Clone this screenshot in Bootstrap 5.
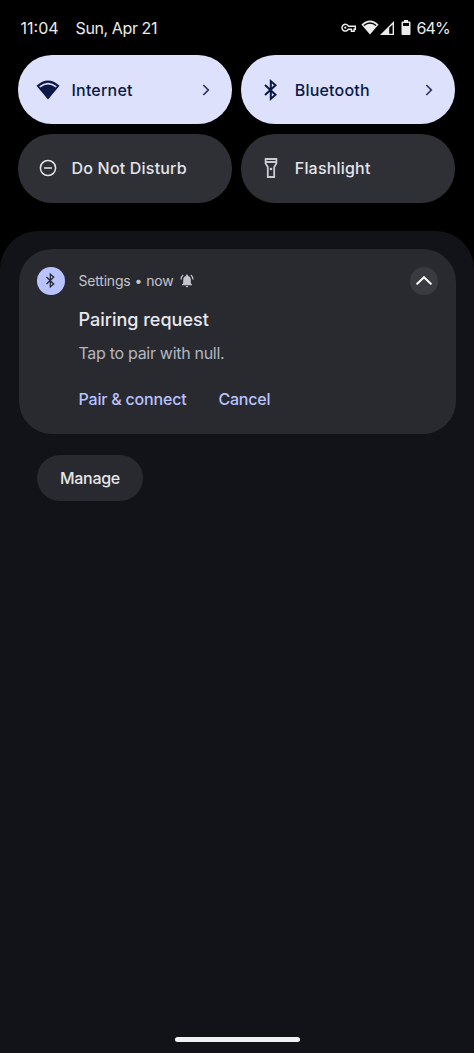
<!DOCTYPE html>
<html lang="en" data-bs-theme="dark">
<head>
    <meta charset="UTF-8">
    <meta name="viewport" content="width=device-width, initial-scale=1.0">
    <title>Notifications</title>
    <!-- Bootstrap 5 CSS -->
    <link href="https://cdn.jsdelivr.net/npm/bootstrap@5.3.2/dist/css/bootstrap.min.css" rel="stylesheet">
    <style>
        body {
            background-color: #000;
            color: #e4e4ea;
            font-family: Inter, Roboto, "Liberation Sans", sans-serif;
            font-size: 16px;
            line-height: 24px;
            min-height: 100vh;
            overflow: hidden;
        }
        svg {
            display: block;
            flex-shrink: 0;
        }
        .status-bar {
            height: 55px;
            padding: 0 24px 0 20.5px;
            color: #ececec;
        }
        .status-date {
            margin-left: 17px;
            letter-spacing: -.4px;
        }
        .status-battery {
            margin-left: 5px;
            letter-spacing: -.8px;
        }
        .quick-tiles {
            display: grid;
            grid-template-columns: 1fr 1fr;
            gap: 9.5px;
            padding: 0 19px 28px 18px;
        }
        .tile {
            height: 69px;
            border: 0;
            border-radius: 34px;
            padding: 0 18px;
            background-color: #2f3036;
            color: #e4e4ea;
            font-weight: 500;
            letter-spacing: .2px;
        }
        .tile-on {
            background-color: #dde1fc;
            color: #0b1847;
        }
        .tile-icon {
            margin-right: 11.5px;
        }
        .shade {
            background-color: #121318;
            border-radius: 38px 38px 0 0;
            padding: 18px 18.5px 11.5px;
        }
        .notice {
            height: 185px;
            border-radius: 33px;
            background-color: #292a2f;
            padding: 18px;
        }
        .notice-badge {
            width: 28px;
            height: 28px;
            margin-right: 14px;
            background-color: #b9c3ff;
            color: #292a2f;
        }
        .notice-head {
            font-size: 14px;
            letter-spacing: -.2px;
            color: #c3c4cd;
        }
        .notice-body {
            padding-left: 42px;
        }
        .notice-title {
            margin: 13.5px 0 8.5px;
            font-size: 18px;
            line-height: 24px;
            font-weight: 500;
            color: #e8e8ed;
        }
        .notice-text {
            margin: 0 0 22px;
            letter-spacing: -.3px;
            color: #b5b6c0;
        }
        .btn-expand {
            width: 28px;
            height: 28px;
            border: 0;
            padding: 0;
            background-color: #3a3b41;
            color: #fff;
        }
        .btn-action {
            border: 0;
            padding: 0;
            line-height: 24px;
            letter-spacing: -.2px;
            color: #b9c3ff;
            font-weight: 500;
        }
        .btn-manage {
            width: 106px;
            height: 46px;
            margin: 21px 0 0 18.5px;
            border: 0;
            padding: 0;
            letter-spacing: -.3px;
            background-color: #292a2f;
            color: #e6e6ea;
            font-weight: 500;
        }
        .home-bar {
            width: 125px;
            height: 5px;
            background-color: #f0f1f3;
        }
    </style>
</head>
<body class="d-flex flex-column">
    <header class="status-bar d-flex align-items-center">
        <span>11:04</span>
        <span class="status-date">Sun, Apr 21</span>
        <div class="d-flex align-items-center ms-auto">
            <svg width="15" height="10" viewBox="0 0 15 10" fill="none" stroke="currentColor" stroke-width="1.5">
                <path d="M7.4 3.2h6.9v3h-1.2v2h-2.7v-2H7.4A3.4 3.4 0 1 1 7.4 3.2Z"/>
                <circle cx="4.3" cy="4.7" r="1.1" fill="currentColor" stroke="none"/>
            </svg>
            <svg width="18" height="15" viewBox="0 0 18 15" fill="currentColor" style="margin-left:5px">
                <path fill-rule="evenodd" d="M.4 4.400Q9-3.400 17.600 4.400L9 14.600ZM2.500 4.900 3.300 5.900Q9 1.500 14.700 5.900L15.500 4.900Q9-.6 2.500 4.900Z"/>
            </svg>
            <svg width="14" height="14" viewBox="0 0 14 14" fill="currentColor" style="margin-left:1px">
                <path fill-rule="evenodd" d="M14 0v14H0ZM12.600 3.400 9.200 6.800v5.900h3.400Z"/>
            </svg>
            <svg width="10" height="15" viewBox="0 0 10 15" fill="currentColor" style="margin-left:7px">
                <path fill-rule="evenodd" d="M3 0h4v1.500h1.600q.9 0 .9.9v11.700q0 .9-.9.9H1.400q-.9 0-.9-.9V2.400q0-.9.9-.9H3ZM2 3v3h6V3Z"/>
            </svg>
            <span class="status-battery">64%</span>
        </div>
    </header>

    <section class="quick-tiles">
        <button class="tile tile-on d-flex align-items-center">
            <svg class="tile-icon" width="24" height="24" viewBox="0 0 24 24" fill="currentColor">
                <path fill-rule="evenodd" d="M.5 7.700Q12-2.700 23.500 7.700L12 21.500ZM3.200 8.300 4.200 9.600Q12 3.600 19.800 9.600L20.800 8.300Q12 1 3.200 8.300Z"/>
            </svg>
            <span>Internet</span>
            <svg class="ms-auto" width="16" height="16" viewBox="0 0 16 16" fill="none" stroke="currentColor" stroke-width="1.700" opacity=".85">
                <path d="M5.300 3 10.300 8l-5 5"/>
            </svg>
        </button>
        <button class="tile tile-on d-flex align-items-center">
            <svg class="tile-icon" width="24" height="24" viewBox="0 0 24 24" fill="none" stroke="currentColor" stroke-width="2">
                <path d="m6 7 10.500 9.800-4.700 4.100V3.100l4.700 4.100L6 17"/>
            </svg>
            <span>Bluetooth</span>
            <svg class="ms-auto" width="16" height="16" viewBox="0 0 16 16" fill="none" stroke="currentColor" stroke-width="1.700" opacity=".85">
                <path d="M5.300 3 10.300 8l-5 5"/>
            </svg>
        </button>
        <button class="tile d-flex align-items-center">
            <svg class="tile-icon" width="24" height="24" viewBox="0 0 24 24" fill="none" stroke="currentColor" stroke-width="1.500">
                <circle cx="12" cy="12" r="7.600"/>
                <path d="M8 12h8"/>
            </svg>
            <span>Do Not Disturb</span>
        </button>
        <button class="tile d-flex align-items-center">
            <svg class="tile-icon" width="24" height="24" viewBox="0 0 24 24" fill="none" stroke="#c9cad4" stroke-width="1.800">
                <path d="M6.600 3h10.800v4.400L15.200 11v10H8.800V11L6.600 7.400ZM6.600 6h10.800"/>
                <circle cx="12" cy="13" r="1.300" fill="#c9cad4" stroke="none"/>
            </svg>
            <span>Flashlight</span>
        </button>
    </section>

    <main class="shade d-flex flex-column flex-grow-1">
        <article class="notice">
            <div class="notice-head d-flex align-items-center">
                <span class="notice-badge rounded-circle d-flex align-items-center justify-content-center">
                    <svg width="17" height="17" viewBox="0 0 24 24" fill="none" stroke="currentColor" stroke-width="1.900">
                        <path d="m6.400 7 10.100 9.800-4.700 4.100V3.100l4.700 4.100L6.400 17"/>
                    </svg>
                </span>
                <span>Settings</span>
                <span class="mx-1">•</span>
                <span>now</span>
                <svg width="14" height="14" viewBox="0 0 14 14" fill="currentColor" style="margin-left:7px">
                    <path d="M6 1.400a1 1 0 0 1 2 0v.5q2.800.8 2.800 3.800v3.500l1.200 1.200v.8H2v-.8l1.200-1.200V5.700q0-3 2.800-3.800ZM5.700 12h2.600a1.300 1.300 0 0 1-2.600 0Z"/>
                    <path d="M3.100 1Q1.100 2.700 1 5.500M10.900 1q2 1.700 2.100 4.500" fill="none" stroke="currentColor" stroke-width="1.200"/>
                </svg>
                <button class="btn btn-expand rounded-circle d-flex align-items-center justify-content-center ms-auto" aria-label="Collapse">
                    <svg width="16" height="10" viewBox="0 0 16 10" fill="none" stroke="currentColor" stroke-width="1.900" stroke-linecap="round">
                        <path d="M1.200 7.800 8 1.200l6.800 6.600"/>
                    </svg>
                </button>
            </div>
            <div class="notice-body">
                <h1 class="notice-title">Pairing request</h1>
                <p class="notice-text">Tap to pair with null.</p>
                <div class="d-flex">
                    <button class="btn btn-action">Pair &amp; connect</button>
                    <button class="btn btn-action" style="margin-left:32px">Cancel</button>
                </div>
            </div>
        </article>
        <button class="btn btn-manage rounded-pill">Manage</button>
        <div class="home-bar rounded-pill mx-auto mt-auto"></div>
    </main>

    <!-- Bootstrap 5 JS Bundle -->
    <script src="https://cdn.jsdelivr.net/npm/bootstrap@5.3.2/dist/js/bootstrap.bundle.min.js"></script>
</body>
</html>
